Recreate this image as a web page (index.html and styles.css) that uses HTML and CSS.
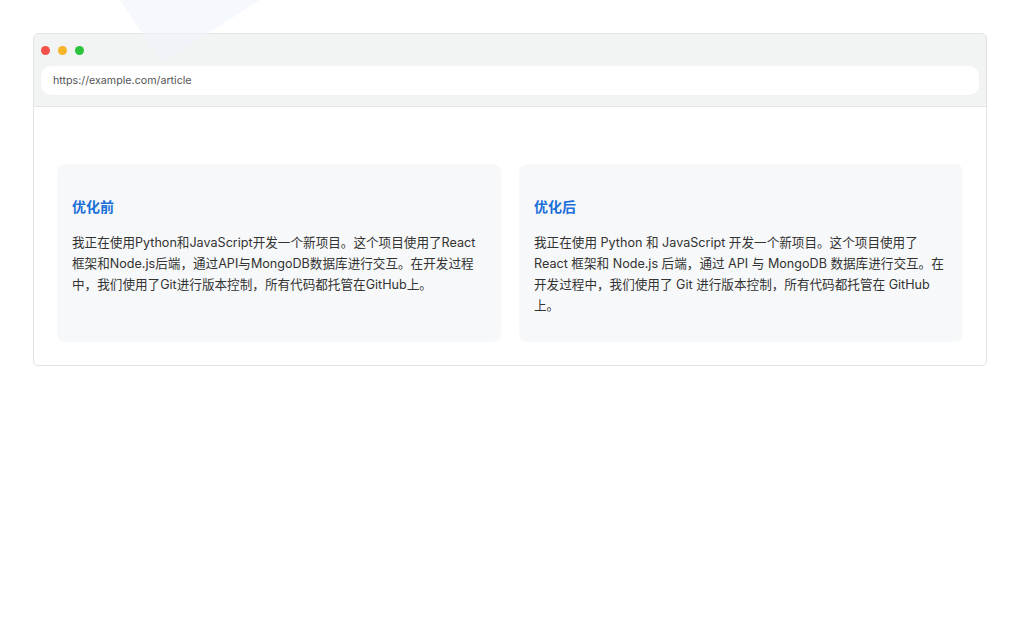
FILE: index.html
```html
<!DOCTYPE html>
<html lang="zh-CN">
<head>
<meta charset="utf-8">
<title>优化前后对比</title>
<link rel="stylesheet" href="styles.css">
</head>
<body>
<div class="deco"></div>
<div class="window">
  <div class="chrome">
    <div class="dots">
      <span class="dot red"></span>
      <span class="dot yellow"></span>
      <span class="dot green"></span>
    </div>
    <div class="address">https://example.com/article</div>
  </div>
  <div class="content">
    <div class="card">
      <h2 class="card-title">优化前</h2>
      <p class="card-text">我正在使用Python和JavaScript开发一个新项目。这个项目使用了React框架和Node.js后端，通过API与MongoDB数据库进行交互。在开发过程中，我们使用了Git进行版本控制，所有代码都托管在GitHub上。</p>
    </div>
    <div class="card">
      <h2 class="card-title">优化后</h2>
      <p class="card-text">我正在使用 Python 和 JavaScript 开发一个新项目。这个项目使用了 React 框架和 Node.js 后端，通过 API 与 MongoDB 数据库进行交互。在开发过程中，我们使用了 Git 进行版本控制，所有代码都托管在 GitHub 上。</p>
    </div>
  </div>
</div>
</body>
</html>
```
FILE: styles.css
```css
* { box-sizing: border-box; }
html, body { margin: 0; padding: 0; background: #ffffff; }
body {
  font-family: "Inter", "Noto Sans CJK SC", sans-serif;
  color: #333;
  padding: 33px 33px 0 33px;
  position: relative;
  min-height: 638px;
}
.deco {
  position: absolute;
  left: 120px;
  top: 0;
  width: 140px;
  height: 63px;
  background: #eef3fb;
  opacity: 0.6;
  clip-path: polygon(0 0, 100% 0, 30% 100%);
  z-index: 2;
  pointer-events: none;
}
.window {
  border: 1px solid #e2e3e4;
  border-radius: 5px;
  background: #fff;
  overflow: hidden;
}
.chrome {
  background: #f2f3f3;
  padding: 12px 7px 11px 7px;
  border-bottom: 1px solid #e4e5e6;
  display: flex;
  flex-direction: column;
  gap: 11px;
}
.dots { display: flex; gap: 8px; height: 9px; }
.dot { width: 9px; height: 9px; border-radius: 50%; display: block; }
.red { background: #f4504a; }
.yellow { background: #f6b42a; }
.green { background: #2bc23d; }
.address {
  height: 29px;
  background: #fff;
  border-radius: 10px;
  padding: 0 12px;
  font-size: 10.7px;
  line-height: 29px;
  color: #555;
  font-family: "Inter", sans-serif;
}
.content {
  display: grid;
  grid-template-columns: 1fr 1fr;
  gap: 18px;
  padding: 57px 23px 23px 23px;
}
.card {
  background: #f7f8f9;
  border-radius: 8px;
  padding: 33px 15px 26px 15px;
}
.card-title {
  margin: 0 0 15px 0;
  font-size: 14px;
  line-height: 20px;
  font-weight: 700;
  color: #1a6fd8;
}
.card-text {
  margin: 0;
  font-size: 12.6px;
  line-height: 21px;
  color: #333;
}
```
